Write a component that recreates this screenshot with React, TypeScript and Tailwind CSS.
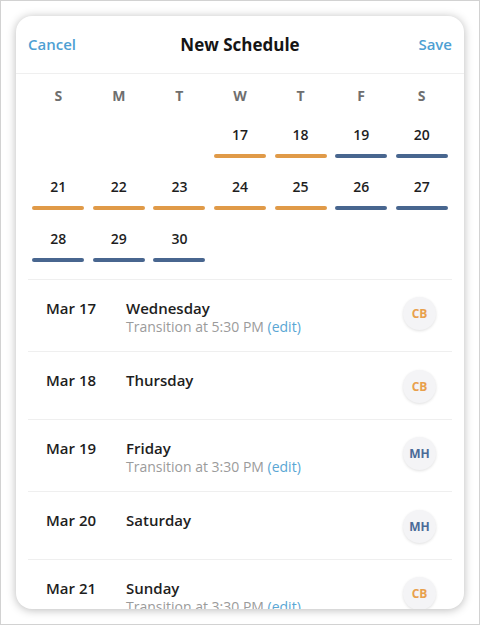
import React from "react";

const ORANGE = "bg-[#e09a48]";
const BLUE = "bg-[#48668f]";

type Cell = { day: number; who: "CB" | "MH" } | null;

const semana = ["S", "M", "T", "W", "T", "F", "S"];

const celdas: Cell[] = [
  null,
  null,
  null,
  { day: 17, who: "CB" },
  { day: 18, who: "CB" },
  { day: 19, who: "MH" },
  { day: 20, who: "MH" },
  { day: 21, who: "CB" },
  { day: 22, who: "CB" },
  { day: 23, who: "CB" },
  { day: 24, who: "CB" },
  { day: 25, who: "CB" },
  { day: 26, who: "MH" },
  { day: 27, who: "MH" },
  { day: 28, who: "MH" },
  { day: 29, who: "MH" },
  { day: 30, who: "MH" },
];

const filas = [
  { date: "Mar 17", name: "Wednesday", sub: "Transition at 5:30 PM", who: "CB" },
  { date: "Mar 18", name: "Thursday", who: "CB" },
  { date: "Mar 19", name: "Friday", sub: "Transition at 3:30 PM", who: "MH" },
  { date: "Mar 20", name: "Saturday", who: "MH" },
  { date: "Mar 21", name: "Sunday", sub: "Transition at 3:30 PM", who: "CB" },
];

function Avatar({ who }: { who: string }) {
  const color = who === "CB" ? "text-[#e8a04c]" : "text-[#4a6b98]";
  return (
    <div
      className={`flex h-[33px] w-[33px] shrink-0 items-center justify-center rounded-full bg-[#f4f4f6] text-[12px] font-bold shadow-[0_1px_3px_rgba(0,0,0,0.12)] ${color}`}
    >
      {who}
    </div>
  );
}

export default function App() {
  return (
    <div
      className="flex h-[625px] w-[480px] flex-col border border-[#d2d2d2] bg-white p-[15px]"
      style={{ fontFamily: '"Open Sans", "Liberation Sans", sans-serif' }}
    >
      <div className="flex flex-1 flex-col overflow-hidden rounded-[16px] bg-white shadow-[0_1px_10px_rgba(0,0,0,0.28)]">
        {/* cabecera */}
        <div className="flex h-[58px] shrink-0 items-center border-b border-[#efefef] px-3">
          <span className="flex-1 text-[15px] font-semibold text-[#4e9fd3]">Cancel</span>
          <span className="text-[17px] font-bold text-[#151515]">New Schedule</span>
          <span className="flex-1 text-right text-[15px] font-semibold text-[#4e9fd3]">Save</span>
        </div>

        {/* calendario */}
        <div className="grid shrink-0 grid-cols-7 gap-y-[19px] px-3 pt-[12px] pb-[17px]">
          {semana.map((d, i) => (
            <div key={i} className="h-[20px] text-center text-[14px] leading-[20px] font-bold text-[#6f6f6f]">
              {d}
            </div>
          ))}
          {celdas.map((c, i) =>
            c ? (
              <div key={i} className="flex flex-col items-center">
                <span className="h-[20px] text-[14px] leading-[20px] font-semibold text-[#1e1e1e]">
                  {c.day}
                </span>
                <div className={`mt-[9px] h-[4px] w-[52px] rounded-full ${c.who === "CB" ? ORANGE : BLUE}`} />
              </div>
            ) : (
              <div key={i} />
            ),
          )}
        </div>

        {/* lista */}
        <div className="mx-3 border-t border-[#efefef]">
          {filas.map((f) => (
            <div key={f.date} className="flex items-center border-b border-[#efefef] py-4 pr-[16px] pl-[18px]">
              <div className="w-[80px] shrink-0 self-start pt-[1px] text-[15px] leading-[22px] font-semibold text-[#1e1e1e]">
                {f.date}
              </div>
              <div className="flex-1 self-start pt-[1px]">
                <div className="text-[15px] leading-[22px] font-semibold text-[#1e1e1e]">{f.name}</div>
                {f.sub && (
                  <div className="text-[14px] leading-[16px] text-[#9b9b9b]">
                    {f.sub} <span className="text-[#5aa6d4]">(edit)</span>
                  </div>
                )}
              </div>
              <div className={f.sub ? "-mt-[4px]" : "mt-[2px]"}>
                <Avatar who={f.who} />
              </div>
            </div>
          ))}
        </div>
      </div>
    </div>
  );
}
